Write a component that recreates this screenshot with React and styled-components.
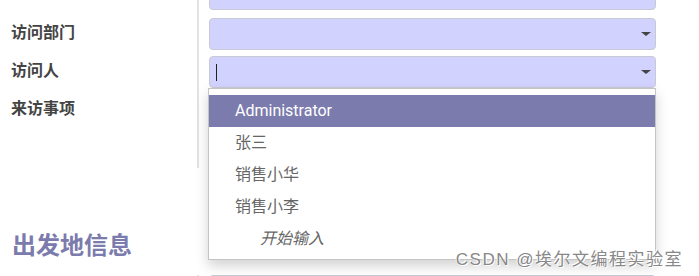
import React from "react";
import styled, { createGlobalStyle } from "styled-components";

const Global = createGlobalStyle`
  html, body { margin: 0; padding: 0; background: #fff; }
  body { font-family: Roboto, "Liberation Sans", "Noto Sans CJK SC", sans-serif; overflow: hidden; }
`;

const Page = styled.div`
  position: relative;
  width: 699px;
  height: 276px;
  overflow: hidden;
`;

const Group = styled.div`
  display: flex;
  flex-direction: column;
  margin-top: ${(p) => p.$offset || 0}px;
`;

const Row = styled.div`
  display: flex;
  align-items: stretch;
`;

const LabelCell = styled.div`
  width: 186px;
  flex: none;
  padding-left: 11px;
  padding-top: 1px;
  border-right: 2px solid #e2e2e2;
  font-family: "Noto Sans CJK SC", sans-serif;
  font-weight: 700;
  font-size: 16px;
  line-height: 24px;
  color: #444;
`;

const FieldCell = styled.div`
  flex: 1;
  padding: 0 43px ${(p) => p.$gap ?? 6}px 10px;
`;

const Control = styled.div`
  position: relative;
  box-sizing: border-box;
  height: ${(p) => p.$h || 32}px;
  background: #d2d2fe;
  border: 1px solid #c9c9d6;
  border-radius: 4px;
  display: flex;
  align-items: center;
  padding: 0 6px;
`;

const Caret = styled.span`
  width: 1px;
  height: 17px;
  background: #222;
`;

const Arrow = styled.span`
  position: absolute;
  right: 4px;
  top: 50%;
  margin-top: -2px;
  width: 0;
  height: 0;
  border-top: 4px solid #444;
  border-left: 5px solid transparent;
  border-right: 5px solid transparent;
`;

const Menu = styled.ul`
  position: absolute;
  top: calc(100% + 1px);
  left: -2px;
  right: -1px;
  margin: 0;
  padding: 6px 0 4px;
  list-style: none;
  background: #fff;
  border: 1px solid #c4c4c4;
  box-shadow: 0 6px 12px rgba(0, 0, 0, 0.175);
  z-index: 10;
`;

const Item = styled.li`
  height: 32px;
  line-height: 32px;
  padding-left: ${(p) => (p.$hint ? 51 : 26)}px;
  font-size: 16px;
  font-family: Roboto, "Liberation Sans", "Noto Sans CJK SC", sans-serif;
  font-style: ${(p) => (p.$hint ? "italic" : "normal")};
  color: ${(p) => (p.$active ? "#fff" : "#666")};
  background: ${(p) => (p.$active ? "#7b7bad" : "transparent")};
`;

const SectionTitle = styled.h2`
  margin: 60px 0 15px 12px;
  font-family: "Noto Sans CJK SC", sans-serif;
  font-size: 24px;
  line-height: 32px;
  font-weight: 700;
  color: #7c7bad;
`;

const Watermark = styled.div`
  position: absolute;
  right: 16px;
  bottom: 6px;
  font-family: "Liberation Sans", "Noto Sans CJK SC", sans-serif;
  font-size: 17px;
  letter-spacing: 1.5px;
  color: #888;
  text-shadow: 1px 1px 0 #fff, -1px -1px 0 #fff;
  z-index: 20;
`;

const options = ["Administrator", "张三", "销售小华", "销售小李"];

export default function App() {
  return (
    <Page>
      <Global />
      <Group $offset={-22}>
        <Row>
          <LabelCell />
          <FieldCell $gap={8}>
            <Control />
          </FieldCell>
        </Row>
        <Row>
          <LabelCell>访问部门</LabelCell>
          <FieldCell>
            <Control>
              <Arrow />
            </Control>
          </FieldCell>
        </Row>
        <Row>
          <LabelCell>访问人</LabelCell>
          <FieldCell>
            <Control>
              <Caret />
              <Arrow />
              <Menu>
                {options.map((o, i) => (
                  <Item key={o} $active={i === 0}>
                    {o}
                  </Item>
                ))}
                <Item $hint>开始输入</Item>
              </Menu>
            </Control>
          </FieldCell>
        </Row>
        <Row>
          <LabelCell>来访事项</LabelCell>
          <FieldCell>
            <Control $h={68} />
          </FieldCell>
        </Row>
      </Group>
      <SectionTitle>出发地信息</SectionTitle>
      <Group>
        <Row>
          <LabelCell>出发地点</LabelCell>
          <FieldCell>
            <Control />
          </FieldCell>
        </Row>
      </Group>
      <Watermark>CSDN @埃尔文编程实验室</Watermark>
    </Page>
  );
}
